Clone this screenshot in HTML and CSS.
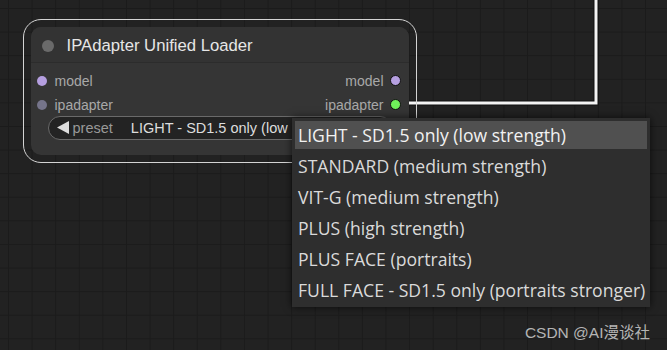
FILE: index.html
```html
<!DOCTYPE html>
<html lang="en">

<head>
  <meta charset="UTF-8">
  <title>IPAdapter Unified Loader</title>
  <link rel="stylesheet" href="styles.css">
</head>

<body>
  <div class="canvas">
    <svg class="links" width="667" height="350" viewBox="0 0 667 350">
      <path d="M404 103 H596 V-4" class="link_shadow" />
      <path d="M404 103 H596 V-4" class="link_core" />
    </svg>

    <div class="node_outline">
      <div class="node">
        <div class="node_title">
          <span class="title_dot"></span>
          <span class="title_text">IPAdapter Unified Loader</span>
        </div>
        <div class="node_body">
          <div class="slot_row">
            <div class="slot slot_in">
              <span class="dot dot_model"></span>
              <span>model</span>
            </div>
            <div class="slot slot_out">
              <span>model</span>
              <span class="dot dot_model dot_out"></span>
            </div>
          </div>
          <div class="slot_row">
            <div class="slot slot_in">
              <span class="dot dot_ipa"></span>
              <span>ipadapter</span>
            </div>
            <div class="slot slot_out">
              <span>ipadapter</span>
              <span class="dot dot_ipa_on dot_out"></span>
            </div>
          </div>
          <div class="widget">
            <svg class="arrow" width="13" height="13" viewBox="0 0 13 13">
              <polygon points="12,0 12,13 0,6.5" fill="#dddddd" />
            </svg>
            <span class="widget_label">preset</span>
            <span class="widget_value">LIGHT - SD1.5 only (low strength)</span>
          </div>
        </div>
      </div>
    </div>

    <ul class="context_menu">
      <li class="menu_item active">LIGHT - SD1.5 only (low strength)</li>
      <li class="menu_item">STANDARD (medium strength)</li>
      <li class="menu_item">VIT-G (medium strength)</li>
      <li class="menu_item">PLUS (high strength)</li>
      <li class="menu_item">PLUS FACE (portraits)</li>
      <li class="menu_item">FULL FACE - SD1.5 only (portraits stronger)</li>
    </ul>

    <div class="watermark">CSDN @AI漫谈社</div>
  </div>
</body>

</html>
```

FILE: styles.css
```css
* {
  box-sizing: border-box;
  margin: 0;
  padding: 0;
}

body {
  background-color: #222222;
  height: 350px;
  overflow: hidden;
  width: 667px;
}

.canvas {
  background-color: #222222;
  background-image:
    linear-gradient(to right, #1b1b1b 1px, transparent 1px),
    linear-gradient(to bottom, #1b1b1b 1px, transparent 1px);
  background-position: 8px 8px;
  background-size: 23.6px 23.6px;
  height: 350px;
  position: relative;
  width: 667px;
}

.links {
  left: 0;
  position: absolute;
  top: 0;
}

.link_shadow {
  fill: none;
  stroke: #111111;
  stroke-width: 5;
}

.link_core {
  fill: none;
  stroke: #f4f4f4;
  stroke-width: 3;
}

/* node */

.node_outline {
  border: 1.5px solid #d4d4d4;
  border-radius: 18px;
  height: 144px;
  left: 23px;
  padding: 6.5px;
  position: absolute;
  top: 19px;
  width: 394px;
}

.node {
  background-color: #353535;
  border-radius: 10px;
  font-family: "Liberation Sans", Arial, sans-serif;
  height: 128px;
  overflow: hidden;
  width: 378px;
}

.node_title {
  align-items: center;
  background-color: #333333;
  border-bottom: 1px solid #2c2c2c;
  display: flex;
  height: 36px;
  padding: 3px 0 0 11px;
}

.title_dot {
  background-color: #6a6a6a;
  border-radius: 50%;
  height: 12px;
  width: 12px;
}

.title_text {
  color: #e6e6e6;
  font-size: 16.7px;
  margin-left: 13px;
}

.node_body {
  padding: 6px 8px 0 6px;
}

.slot_row {
  align-items: center;
  display: flex;
  height: 24px;
  justify-content: space-between;
}

.slot {
  align-items: center;
  color: #a8a8a8;
  display: flex;
  font-size: 14px;
  gap: 8px;
}

.slot_out {
  gap: 6px;
}

.dot {
  border-radius: 50%;
  height: 10px;
  width: 10px;
}

.dot_out {
  border: 1px solid #111111;
  height: 11px;
  width: 11px;
}

.dot_model {
  background-color: #b59fe0;
}

.dot_ipa {
  background-color: #75748a;
}

.dot_ipa_on {
  background-color: #6fef5a;
}

.widget {
  align-items: center;
  background-color: #232323;
  border: 1px solid #6a6a6a;
  border-radius: 12px;
  display: flex;
  height: 24px;
  margin: -1px 9px 0 11px;
  overflow: hidden;
  padding-left: 8px;
  white-space: nowrap;
}

.widget_label {
  color: #999999;
  font-size: 14.5px;
  margin-left: 3px;
}

/* the dropdown covers the rest of the value */
.widget_value {
  color: #dddddd;
  font-size: 14.5px;
  margin-left: 18px;
  max-width: 160px;
  overflow: hidden;
}

/* dropdown */

.context_menu {
  background-color: #2e2e2e;
  box-shadow: 0 0 8px rgba(0, 0, 0, 0.7);
  left: 292px;
  list-style: none;
  padding: 3px 3px 0 3px;
  position: absolute;
  top: 118px;
  width: 358px;
}

.menu_item {
  color: #dadada;
  font-family: "Open Sans", sans-serif;
  font-size: 17.6px;
  height: 28px;
  line-height: 28px;
  margin-bottom: 3px;
  padding-left: 3px;
  white-space: nowrap;
}

.menu_item.active {
  background-color: #505050;
  color: #f2f2f2;
}

.watermark {
  color: #b4b4b4;
  font-family: "Liberation Sans", "Noto Sans CJK SC", sans-serif;
  font-size: 15.5px;
  position: absolute;
  right: 17px;
  top: 320px;
}
```
